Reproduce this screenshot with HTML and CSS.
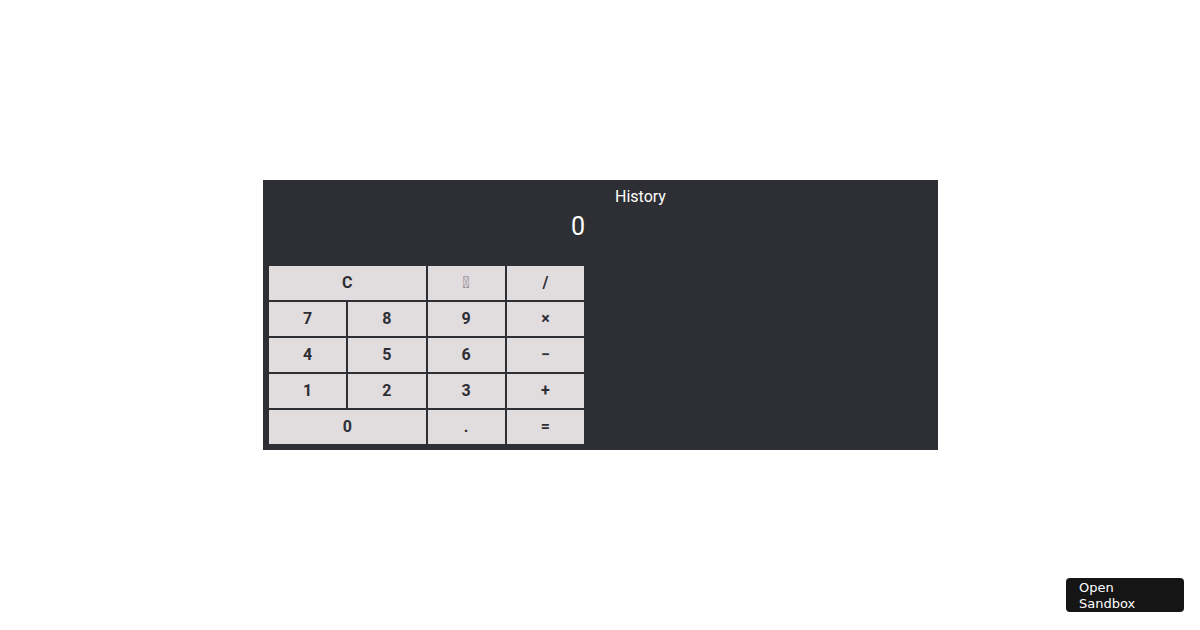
FILE: index.html
```html
<!DOCTYPE html>
<html>
<head>
<meta charset="utf-8">
<link rel="stylesheet" href="styles.css">
</head>
<body>
<div class="page">
  <div class="app">
    <div class="calc">
      <div class="display">0</div>
      <div class="keys">
        <button class="key span2">C</button>
        <button class="key tofu">&#xE000;</button>
        <button class="key">/</button>
        <button class="key">7</button>
        <button class="key">8</button>
        <button class="key">9</button>
        <button class="key">×</button>
        <button class="key">4</button>
        <button class="key">5</button>
        <button class="key">6</button>
        <button class="key">−</button>
        <button class="key">1</button>
        <button class="key">2</button>
        <button class="key">3</button>
        <button class="key">+</button>
        <button class="key span2">0</button>
        <button class="key">.</button>
        <button class="key">=</button>
      </div>
    </div>
    <div class="history">
      <div class="history-title">History</div>
    </div>
  </div>
</div>
<a class="sandbox">Open Sandbox</a>
</body>
</html>
```
FILE: styles.css
```css
html, body {
  margin: 0;
  padding: 0;
  background: #ffffff;
  font-family: Roboto, "Liberation Sans", sans-serif;
}
.page {
  width: 1200px;
  height: 630px;
  display: flex;
  justify-content: center;
  align-items: center;
}
.app {
  width: 675px;
  height: 270px;
  margin-left: 1px;
  background: #2e2f34;
  display: flex;
  box-sizing: border-box;
}
.calc {
  width: 327px;
  padding: 0 6px 6px 6px;
  box-sizing: border-box;
  display: flex;
  flex-direction: column;
  justify-content: flex-end;
}
.display {
  color: #ffffff;
  font-size: 25px;
  text-align: right;
  line-height: 28px;
  margin-right: -1px;
  margin-bottom: 25px;
}
.keys {
  display: grid;
  grid-template-columns: repeat(4, 1fr);
  grid-auto-rows: 34px;
  gap: 2px;
}
.key {
  border: none;
  margin: 0;
  padding: 0 0 2px 0;
  background: #e1dcde;
  color: #2e2f34;
  font-family: Roboto, "Liberation Sans", sans-serif;
  font-weight: bold;
  font-size: 16px;
}
.span2 {
  grid-column: span 2;
}
.tofu {
  font-weight: normal;
  color: #777;
}
.history {
  flex: 1;
  padding-left: 25px;
  padding-top: 7px;
}
.history-title {
  color: #ffffff;
  font-size: 16px;
  line-height: 19px;
}
.sandbox {
  position: absolute;
  left: 1066px;
  top: 578px;
  width: 118px;
  height: 34px;
  box-sizing: border-box;
  padding: 2px 13px 0 13px;
  background: #151515;
  border-radius: 4px;
  color: #ffffff;
  font-family: "DejaVu Sans", sans-serif;
  font-size: 13px;
  line-height: 16px;
}
```
